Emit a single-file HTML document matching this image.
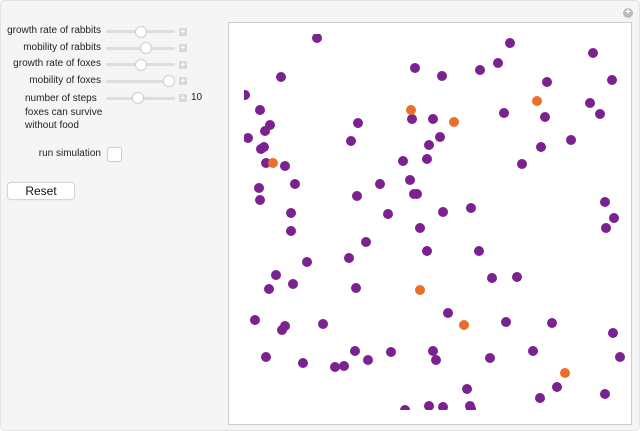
<!DOCTYPE html>
<html><head><style>
body{margin:0;width:640px;height:431px;background:#fff;font-family:"Liberation Sans",sans-serif;overflow:hidden}
.panel{position:absolute;left:0;top:0;width:638px;height:429px;background:#f5f5f5;border:1px solid #e2e2e2;border-radius:5px}
.lbl{position:absolute;font-size:10px;color:#222;text-align:right;width:101px;left:0;white-space:nowrap}
.trk{position:absolute;left:106px;width:69px;height:3px;background:#ddd;border-radius:2px}
.th{position:absolute;width:10px;height:10px;border-radius:50%;background:#fff;box-shadow:0 0 1px 1px #ccc}
.pl{position:absolute;left:179px;width:8px;height:8px;background:#d8d8d8;color:#fff;font-size:8px;line-height:8px;text-align:center;font-weight:bold}
</style></head><body>
<div class="panel"></div>
<div style="position:absolute;left:623px;top:8px;width:10px;height:10px;border-radius:50%;background:#bbb;color:#fff;font-size:10px;line-height:10px;text-align:center;font-weight:bold">+</div>

<div class="lbl" style="top:25px">growth rate of rabbits</div>
<div class="lbl" style="top:42px">mobility of rabbits</div>
<div class="lbl" style="top:58px">growth rate of foxes</div>
<div class="lbl" style="top:75px">mobility of foxes</div>
<div style="position:absolute;left:25px;top:92px;font-size:10px;line-height:13.5px;color:#222">number of steps<br>foxes can survive<br>without food</div>
<div class="trk" style="top:30px"></div><div class="th" style="left:136px;top:27px"></div><div class="pl" style="top:28px">+</div>
<div class="trk" style="top:47px"></div><div class="th" style="left:141px;top:43px"></div><div class="pl" style="top:44px">+</div>
<div class="trk" style="top:63px"></div><div class="th" style="left:136px;top:60px"></div><div class="pl" style="top:61px">+</div>
<div class="trk" style="top:80px"></div><div class="th" style="left:164px;top:76px"></div><div class="pl" style="top:77px">+</div>
<div class="trk" style="top:97px"></div><div class="th" style="left:133px;top:93px"></div><div class="pl" style="top:94px">+</div>
<div style="position:absolute;left:191px;top:92px;font-size:10px;color:#222">10</div>
<div class="lbl" style="top:148px">run simulation</div>
<div style="position:absolute;left:107px;top:147px;width:13px;height:13px;background:#fff;border:1px solid #ccc;border-radius:3px"></div>
<div style="position:absolute;left:8px;top:183px;width:66px;height:16px;background:#fff;border-radius:3px;box-shadow:0 0 1px 1px #d0d0d0;font-size:12px;line-height:16px;text-align:center;color:#111">Reset</div>

<div style="position:absolute;left:228px;top:22px;width:402px;height:401px;background:#fff;border:1px solid #ccc"></div>
<svg style="position:absolute;left:0;top:0" width="640" height="431">
<defs><clipPath id="c"><rect x="244" y="34" width="386" height="376"/></clipPath></defs>
<g clip-path="url(#c)" fill="#7b2290">
<circle cx="317" cy="38" r="5"/><circle cx="510" cy="43" r="5"/><circle cx="593" cy="53" r="5"/><circle cx="281" cy="77" r="5"/><circle cx="415" cy="68" r="5"/><circle cx="442" cy="76" r="5"/><circle cx="480" cy="70" r="5"/><circle cx="498" cy="63" r="5"/><circle cx="547" cy="82" r="5"/><circle cx="612" cy="80" r="5"/><circle cx="245" cy="95" r="5"/><circle cx="260" cy="110" r="5"/><circle cx="590" cy="103" r="5"/><circle cx="600" cy="114" r="5"/><circle cx="504" cy="113" r="5"/><circle cx="545" cy="117" r="5"/><circle cx="412" cy="119" r="5"/><circle cx="433" cy="119" r="5"/><circle cx="358" cy="123" r="5"/><circle cx="270" cy="125" r="5"/><circle cx="265" cy="131" r="5"/><circle cx="248" cy="138" r="5"/><circle cx="351" cy="141" r="5"/><circle cx="440" cy="137" r="5"/><circle cx="429" cy="145" r="5"/><circle cx="571" cy="140" r="5"/><circle cx="541" cy="147" r="5"/><circle cx="264" cy="147" r="5"/><circle cx="261" cy="149" r="5"/><circle cx="285" cy="166" r="5"/><circle cx="266" cy="163" r="5"/><circle cx="403" cy="161" r="5"/><circle cx="427" cy="159" r="5"/><circle cx="522" cy="164" r="5"/><circle cx="295" cy="184" r="5"/><circle cx="380" cy="184" r="5"/><circle cx="410" cy="180" r="5"/><circle cx="259" cy="188" r="5"/><circle cx="417" cy="194" r="5"/><circle cx="414" cy="194" r="5"/><circle cx="357" cy="196" r="5"/><circle cx="260" cy="200" r="5"/><circle cx="605" cy="202" r="5"/><circle cx="614" cy="218" r="5"/><circle cx="471" cy="208" r="5"/><circle cx="443" cy="212" r="5"/><circle cx="291" cy="213" r="5"/><circle cx="388" cy="214" r="5"/><circle cx="420" cy="228" r="5"/><circle cx="291" cy="231" r="5"/><circle cx="606" cy="228" r="5"/><circle cx="366" cy="242" r="5"/><circle cx="427" cy="251" r="5"/><circle cx="479" cy="251" r="5"/><circle cx="307" cy="262" r="5"/><circle cx="349" cy="258" r="5"/><circle cx="276" cy="275" r="5"/><circle cx="492" cy="278" r="5"/><circle cx="517" cy="277" r="5"/><circle cx="269" cy="289" r="5"/><circle cx="293" cy="284" r="5"/><circle cx="356" cy="288" r="5"/><circle cx="448" cy="313" r="5"/><circle cx="255" cy="320" r="5"/><circle cx="285" cy="326" r="5"/><circle cx="282" cy="330" r="5"/><circle cx="323" cy="324" r="5"/><circle cx="506" cy="322" r="5"/><circle cx="552" cy="323" r="5"/><circle cx="613" cy="333" r="5"/><circle cx="355" cy="351" r="5"/><circle cx="433" cy="351" r="5"/><circle cx="391" cy="352" r="5"/><circle cx="368" cy="360" r="5"/><circle cx="266" cy="357" r="5"/><circle cx="303" cy="363" r="5"/><circle cx="335" cy="367" r="5"/><circle cx="344" cy="366" r="5"/><circle cx="436" cy="360" r="5"/><circle cx="490" cy="358" r="5"/><circle cx="533" cy="351" r="5"/><circle cx="620" cy="357" r="5"/><circle cx="467" cy="389" r="5"/><circle cx="557" cy="387" r="5"/><circle cx="540" cy="398" r="5"/><circle cx="605" cy="394" r="5"/><circle cx="405" cy="410" r="5"/><circle cx="429" cy="406" r="5"/><circle cx="443" cy="407" r="5"/><circle cx="470" cy="406" r="5"/><circle cx="471" cy="409" r="5"/>
</g>
<g clip-path="url(#c)" fill="#e8702a">
<circle cx="411" cy="110" r="5"/><circle cx="537" cy="101" r="5"/><circle cx="454" cy="122" r="5"/><circle cx="273" cy="163" r="5"/><circle cx="420" cy="290" r="5"/><circle cx="464" cy="325" r="5"/><circle cx="565" cy="373" r="5"/>
</g>
</svg>
</body></html>
